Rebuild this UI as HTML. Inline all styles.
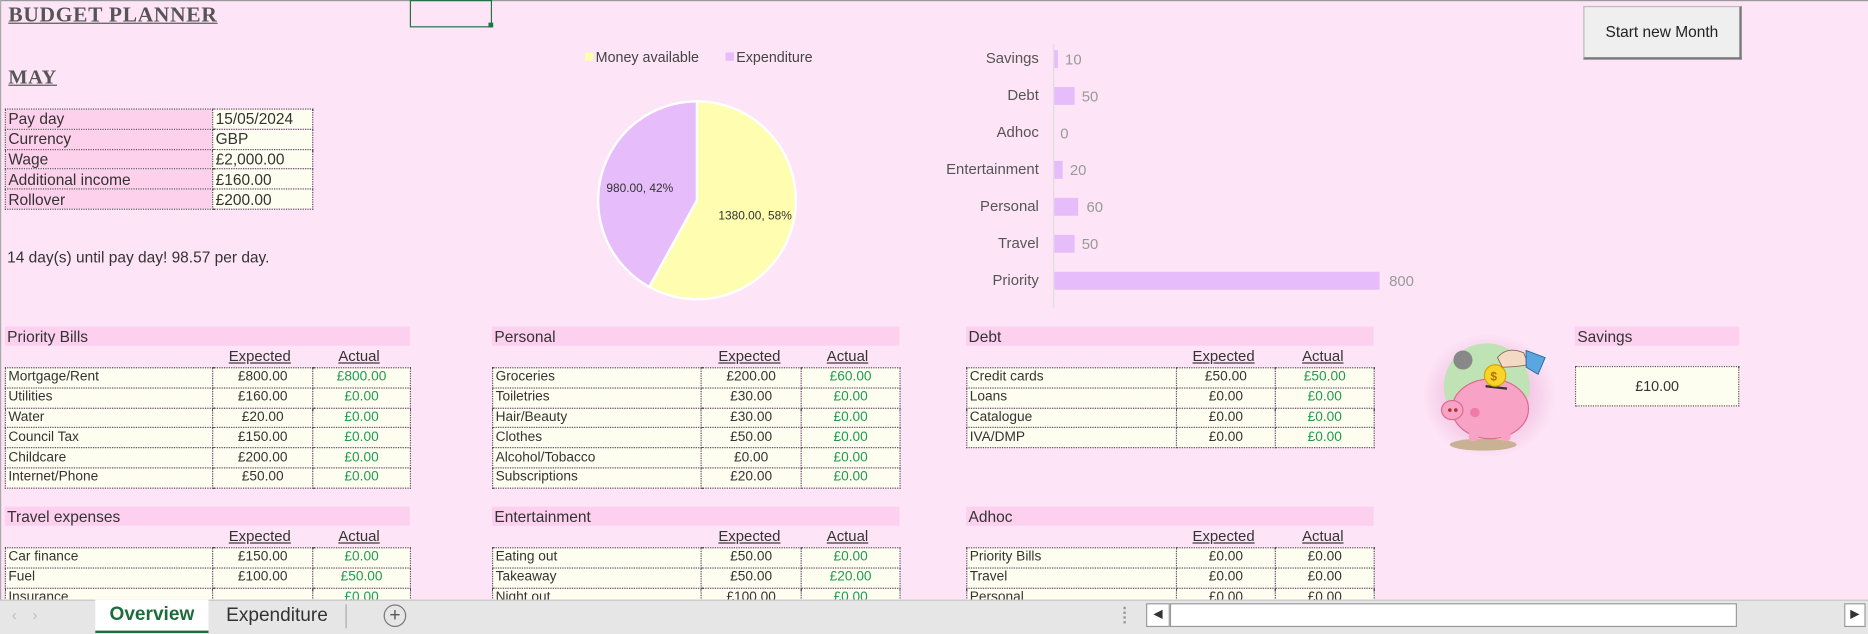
<!DOCTYPE html>
<html><head><meta charset="utf-8"><style>
html,body{margin:0;padding:0;width:1868px;height:633px;overflow:hidden;background:#fde4f6;}
#c{position:absolute;left:0;top:0;width:1568px;height:531px;transform:scale(1.19133,1.1921);transform-origin:0 0;background:#fde4f6;font-family:"Liberation Sans",sans-serif;color:#333;}
.a{position:absolute;}
.t{position:absolute;border-collapse:collapse;table-layout:fixed;font-size:11.5px;}
.t td{border:1px dotted #555;height:15.8px;padding:0 2px;line-height:15px;white-space:nowrap;overflow:hidden;}
.t td.l{background:#fefef0;}
.t td.n{background:#fefef0;text-align:center;}
.t td.g{background:#fefef0;text-align:center;color:#1f9a50;}
.hd{position:absolute;background:#fcd0ee;height:16px;font-size:13px;line-height:17px;padding-left:2px;box-sizing:border-box;color:#333;}
.eh{position:absolute;font-size:12.5px;text-decoration:underline;color:#333;}
.bl{position:absolute;font-size:12.5px;color:#555;text-align:right;width:120px;}
.bv{position:absolute;font-size:12.5px;color:#999;}
.bar{position:absolute;background:#e6bcfa;height:15px;left:885px;}
</style></head><body><div id="c">
<div class="a" style="left:0;top:0;width:1568px;height:1px;background:#999"></div>
<div class="a" style="left:0;top:0;width:1px;height:503px;background:#aaa"></div>
<div class="a" style="left:7px;top:2px;font-family:'Liberation Serif',serif;font-size:18px;text-decoration:underline;color:#555;letter-spacing:0.6px;font-weight:bold">BUDGET PLANNER</div>
<div class="a" style="left:7px;top:55px;font-family:'Liberation Serif',serif;font-size:17px;text-decoration:underline;color:#555;letter-spacing:0.6px;font-weight:bold">MAY</div>
<div class="a" style="left:344px;top:0;width:67px;height:21px;border:1.5px solid #217346;"></div>
<div class="a" style="left:410px;top:19px;width:4px;height:4px;background:#217346"></div>

<table class="t" style="left:4px;top:91px;width:258px;font-size:13px">
<col style="width:174px"><col style="width:84px">
<tr><td style="background:#fdd0ec">Pay day</td><td class="l">15/05/2024</td></tr>
<tr><td style="background:#fdd0ec">Currency</td><td class="l">GBP</td></tr>
<tr><td style="background:#fdd0ec">Wage</td><td class="l">£2,000.00</td></tr>
<tr><td style="background:#fdd0ec">Additional income</td><td class="l">£160.00</td></tr>
<tr><td style="background:#fdd0ec">Rollover</td><td class="l">£200.00</td></tr>
</table>
<div class="a" style="left:6px;top:208px;font-size:13px;color:#333">14 day(s) until pay day! 98.57 per day.</div>

<div class="a" style="left:491px;top:44px;width:7px;height:7px;background:#fefdb0"></div>
<div class="a" style="left:500px;top:41px;font-size:12px;color:#444">Money available</div>
<div class="a" style="left:609px;top:44px;width:7px;height:7px;background:#e6bcfa"></div>
<div class="a" style="left:618px;top:41px;font-size:12px;color:#444">Expenditure</div>
<svg class="a" style="left:0;top:0" width="1568" height="300">
<path d="M585,168 L585,85 A83,83 0 1 1 545,240.7 Z" fill="#fefdb0" stroke="#fff" stroke-width="2"/>
<path d="M585,168 L545,240.7 A83,83 0 0 1 585,85 Z" fill="#e6bcfa" stroke="#fff" stroke-width="2"/>
<text x="509" y="161" font-size="10" fill="#333" font-family="Liberation Sans">980.00, 42%</text>
<text x="603" y="184" font-size="10" fill="#333" font-family="Liberation Sans">1380.00, 58%</text>
<line x1="884.5" y1="37" x2="884.5" y2="258" stroke="#ddd" stroke-width="1"/>
</svg>

<div class="bl" style="left:752px;top:42px">Savings</div><div class="bar" style="top:42px;width:3px"></div><div class="bv" style="left:894px;top:43px">10</div>
<div class="bl" style="left:752px;top:73px">Debt</div><div class="bar" style="top:73px;width:17px"></div><div class="bv" style="left:908px;top:74px">50</div>
<div class="bl" style="left:752px;top:104px">Adhoc</div><div class="bv" style="left:890px;top:105px">0</div>
<div class="bl" style="left:752px;top:135px">Entertainment</div><div class="bar" style="top:135px;width:7px"></div><div class="bv" style="left:898px;top:136px">20</div>
<div class="bl" style="left:752px;top:166px">Personal</div><div class="bar" style="top:166px;width:20px"></div><div class="bv" style="left:912px;top:167px">60</div>
<div class="bl" style="left:752px;top:197px">Travel</div><div class="bar" style="top:197px;width:17px"></div><div class="bv" style="left:908px;top:198px">50</div>
<div class="bl" style="left:752px;top:228px">Priority</div><div class="bar" style="top:228px;width:273px"></div><div class="bv" style="left:1166px;top:229px">800</div>

<div class="a" style="left:1329px;top:5px;width:130px;height:42px;background:#efefef;border:1px solid #bbb;border-right:2px solid #777;border-bottom:2px solid #777;font-size:13px;line-height:42px;text-align:center;color:#222">Start new Month</div>

<div class="hd" style="left:4px;top:274px;width:340px">Priority Bills</div>
<div class="eh" style="left:192px;top:292px">Expected</div><div class="eh" style="left:284px;top:292px">Actual</div>
<table class="t" style="left:4px;top:308px;width:340px"><col style="width:174px"><col style="width:84px"><col style="width:82px">
<tr><td class="l">Mortgage/Rent</td><td class="n">£800.00</td><td class="g">£800.00</td></tr>
<tr><td class="l">Utilities</td><td class="n">£160.00</td><td class="g">£0.00</td></tr>
<tr><td class="l">Water</td><td class="n">£20.00</td><td class="g">£0.00</td></tr>
<tr><td class="l">Council Tax</td><td class="n">£150.00</td><td class="g">£0.00</td></tr>
<tr><td class="l">Childcare</td><td class="n">£200.00</td><td class="g">£0.00</td></tr>
<tr><td class="l">Internet/Phone</td><td class="n">£50.00</td><td class="g">£0.00</td></tr>
</table>

<div class="hd" style="left:413px;top:274px;width:342px">Personal</div>
<div class="eh" style="left:603px;top:292px">Expected</div><div class="eh" style="left:694px;top:292px">Actual</div>
<table class="t" style="left:413px;top:308px;width:342px"><col style="width:175px"><col style="width:84px"><col style="width:83px">
<tr><td class="l">Groceries</td><td class="n">£200.00</td><td class="g">£60.00</td></tr>
<tr><td class="l">Toiletries</td><td class="n">£30.00</td><td class="g">£0.00</td></tr>
<tr><td class="l">Hair/Beauty</td><td class="n">£30.00</td><td class="g">£0.00</td></tr>
<tr><td class="l">Clothes</td><td class="n">£50.00</td><td class="g">£0.00</td></tr>
<tr><td class="l">Alcohol/Tobacco</td><td class="n">£0.00</td><td class="g">£0.00</td></tr>
<tr><td class="l">Subscriptions</td><td class="n">£20.00</td><td class="g">£0.00</td></tr>
</table>

<div class="hd" style="left:811px;top:274px;width:342px">Debt</div>
<div class="eh" style="left:1001px;top:292px">Expected</div><div class="eh" style="left:1093px;top:292px">Actual</div>
<table class="t" style="left:811px;top:308px;width:342px"><col style="width:176px"><col style="width:83px"><col style="width:83px">
<tr><td class="l">Credit cards</td><td class="n">£50.00</td><td class="g">£50.00</td></tr>
<tr><td class="l">Loans</td><td class="n">£0.00</td><td class="g">£0.00</td></tr>
<tr><td class="l">Catalogue</td><td class="n">£0.00</td><td class="g">£0.00</td></tr>
<tr><td class="l">IVA/DMP</td><td class="n">£0.00</td><td class="g">£0.00</td></tr>
</table>

<div class="hd" style="left:1322px;top:274px;width:138px">Savings</div>
<div class="a" style="left:1322px;top:307px;width:136px;height:32px;border:1px dotted #555;background:#fefef0;font-size:12px;text-align:center;line-height:32px">£10.00</div>

<svg class="a" style="left:1195px;top:280px" width="115" height="105" viewBox="0 0 115 105">
<defs><radialGradient id="gl"><stop offset="0.6" stop-color="#f3c8e6"/><stop offset="1" stop-color="#fde4f6"/></radialGradient></defs>
<ellipse cx="55" cy="52" rx="56" ry="52" fill="url(#gl)"/>
<circle cx="53" cy="44" r="36" fill="#bfe3b5"/>
<circle cx="33" cy="22" r="8" fill="#888"/>
<ellipse cx="50" cy="93" rx="28" ry="5" fill="#c9b193"/>
<ellipse cx="56" cy="63" rx="32" ry="25" fill="#f8a3c6" stroke="#d9698f" stroke-width="1"/>
<ellipse cx="24" cy="64" rx="9" ry="8" fill="#f8a3c6" stroke="#d9698f"/>
<circle cx="22" cy="64" r="1.5" fill="#a33"/><circle cx="27" cy="64" r="1.5" fill="#a33"/>
<rect x="38" y="80" width="8" height="10" rx="3" fill="#f8a3c6"/><rect x="65" y="80" width="8" height="10" rx="3" fill="#f8a3c6"/>
<circle cx="43" cy="66" r="4" fill="#f07aa8"/>
<path d="M52 44 L70 46" stroke="#333" stroke-width="2"/>
<circle cx="60" cy="35" r="9" fill="#f7d42a" stroke="#d6a400"/>
<text x="56" y="39" font-size="10" fill="#b07000" font-family="Liberation Sans" font-weight="bold">$</text>
<path d="M62 20 Q70 10 84 16 L88 26 Q75 28 66 28 Z" fill="#f4d9c4" stroke="#8a6a5a" stroke-width="0.8"/>
<path d="M86 14 L102 20 L96 34 L86 28 Z" fill="#5aa6e0" stroke="#2d6a9a" stroke-width="0.8"/>
</svg>

<div class="hd" style="left:4px;top:425px;width:340px">Travel expenses</div>
<div class="eh" style="left:192px;top:443px">Expected</div><div class="eh" style="left:284px;top:443px">Actual</div>
<table class="t" style="left:4px;top:459px;width:340px"><col style="width:174px"><col style="width:84px"><col style="width:82px">
<tr><td class="l">Car finance</td><td class="n">£150.00</td><td class="g">£0.00</td></tr>
<tr><td class="l">Fuel</td><td class="n">£100.00</td><td class="g">£50.00</td></tr>
<tr><td class="l">Insurance</td><td class="n"></td><td class="g">£0.00</td></tr>
</table>

<div class="hd" style="left:413px;top:425px;width:342px">Entertainment</div>
<div class="eh" style="left:603px;top:443px">Expected</div><div class="eh" style="left:694px;top:443px">Actual</div>
<table class="t" style="left:413px;top:459px;width:342px"><col style="width:175px"><col style="width:84px"><col style="width:83px">
<tr><td class="l">Eating out</td><td class="n">£50.00</td><td class="g">£0.00</td></tr>
<tr><td class="l">Takeaway</td><td class="n">£50.00</td><td class="g">£20.00</td></tr>
<tr><td class="l">Night out</td><td class="n">£100.00</td><td class="g">£0.00</td></tr>
</table>

<div class="hd" style="left:811px;top:425px;width:342px">Adhoc</div>
<div class="eh" style="left:1001px;top:443px">Expected</div><div class="eh" style="left:1093px;top:443px">Actual</div>
<table class="t" style="left:811px;top:459px;width:342px"><col style="width:176px"><col style="width:83px"><col style="width:83px">
<tr><td class="l">Priority Bills</td><td class="n">£0.00</td><td class="n">£0.00</td></tr>
<tr><td class="l">Travel</td><td class="n">£0.00</td><td class="n">£0.00</td></tr>
<tr><td class="l">Personal</td><td class="n">£0.00</td><td class="n">£0.00</td></tr>
</table>

<div class="a" style="left:0;top:503px;width:1568px;height:28px;background:#e6e6e6;border-top:1px solid #c6c6c6"></div>
<div class="a" style="left:10px;top:509px;font-size:12px;color:#bbb">&#x2039;&nbsp;&nbsp;&nbsp;&nbsp;&#x203A;</div>
<div class="a" style="left:80px;top:503px;width:95px;height:26px;background:#fff;border-bottom:2px solid #1e6b3c;font-size:16px;font-weight:bold;color:#1e6b3c;text-align:center;line-height:26px">Overview</div>
<div class="a" style="left:175px;top:504px;width:115px;height:26px;font-size:16px;color:#333;text-align:center;line-height:26px">Expenditure</div>
<div class="a" style="left:290px;top:507px;width:1px;height:20px;background:#aaa"></div>
<div class="a" style="left:322px;top:507px;width:17px;height:17px;border:1px solid #777;border-radius:50%;font-size:16px;line-height:17px;text-align:center;color:#555">+</div>
<div class="a" style="left:943px;top:509px;width:2px;height:14px;border-left:2px dotted #999"></div>
<div class="a" style="left:962px;top:506px;width:20px;height:20px;background:#fff;border:1px solid #999;box-sizing:border-box;font-size:10px;line-height:18px;text-align:center">&#9664;</div>
<div class="a" style="left:982px;top:506px;width:476px;height:20px;background:#fff;border:1px solid #999;box-sizing:border-box"></div>
<div class="a" style="left:1548px;top:506px;width:18px;height:20px;background:#fff;border:1px solid #999;box-sizing:border-box;font-size:10px;line-height:18px;text-align:center">&#9654;</div>
</div></body></html>
